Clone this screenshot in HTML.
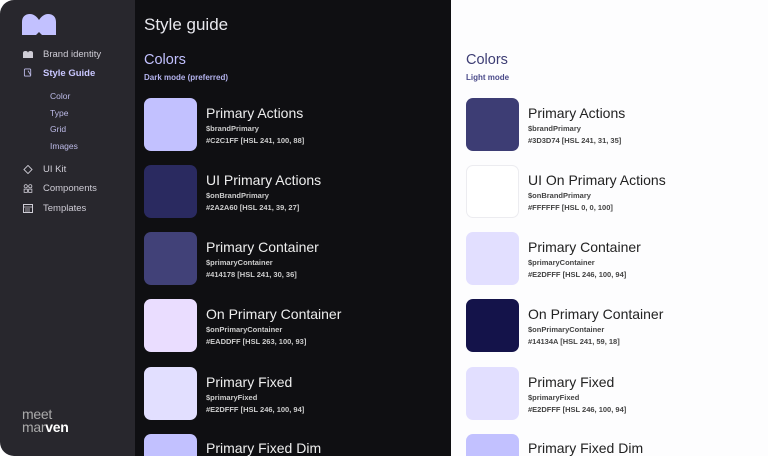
<!DOCTYPE html>
<html style="width:768px;height:456px;overflow:hidden"><head><style>
*{margin:0;padding:0;box-sizing:border-box}
body{width:768px;height:456px;background:#fff;position:relative;overflow:hidden;font-family:"Liberation Sans",sans-serif}
.side{position:absolute;left:0;top:0;width:136px;height:456px;background:#28272d;border-radius:14px 0 0 14px}
.dark{position:absolute;left:135px;top:0;width:316px;height:456px;background:#0f0f12}
.light{position:absolute;left:451px;top:0;width:317px;height:456px;background:#fdfdfe}
.nav{position:absolute;left:43px;font-size:9.5px;color:#cfcdd6}
.sub{position:absolute;left:50px;font-size:8.5px;color:#bdbbe8}
.ic{position:absolute;left:23px;width:10px;height:9px}
.h1{position:absolute;left:144px;top:15px;font-size:17px;color:#e8e8ee}
.h2{position:absolute;top:52px;font-size:14.5px}
.h3{position:absolute;top:73px;font-size:8px;font-weight:bold}
.sw{position:absolute;width:53px;height:53px;border-radius:7px}
.t{position:absolute;font-size:14px;line-height:16px}
.v{position:absolute;font-size:7.5px;font-weight:bold}
.last{height:22px;border-radius:7px 7px 0 0}
</style></head><body>
<div class="side">
<svg style="position:absolute;left:22px;top:14px" width="34" height="21" viewBox="0 0 34 21"><path d="M0 8C0 3 3 0 8 0C12 0 15 3 17 6C19 3 22 0 26 0C31 0 34 3 34 8V21H20L17 18L14 21H0Z" fill="#c2c1ff"/></svg>
<svg class="ic" style="top:50px" viewBox="0 0 10 9"><path d="M0 3Q0 1 2.5 1T5 3Q5 1 7.5 1T10 3V8H0Z" fill="#cfcdd6"/></svg>
<div class="nav" style="top:49px">Brand identity</div>
<svg class="ic" style="top:68px" viewBox="0 0 10 10"><rect x="1" y="1" width="7" height="8" rx="1" fill="none" stroke="#bdbbe8"/><path d="M5 3L8 8" stroke="#bdbbe8"/></svg>
<div class="nav" style="top:68px;color:#c9c7ff;font-weight:bold">Style Guide</div>
<div class="sub" style="top:91px">Color</div>
<div class="sub" style="top:108px">Type</div>
<div class="sub" style="top:124px">Grid</div>
<div class="sub" style="top:141px">Images</div>
<svg class="ic" style="top:165px" viewBox="0 0 10 10"><path d="M5 0.5L9.5 5L5 9.5L0.5 5Z" fill="none" stroke="#cfcdd6"/></svg>
<div class="nav" style="top:164px">UI Kit</div>
<svg class="ic" style="top:184px" viewBox="0 0 10 10"><g fill="none" stroke="#cfcdd6" stroke-width=".9"><circle cx="2.5" cy="2.5" r="1.8"/><circle cx="7.5" cy="2.5" r="1.8"/><rect x=".7" y="5.7" width="3.6" height="3.6"/><rect x="5.7" y="5.7" width="3.6" height="3.6"/></g></svg>
<div class="nav" style="top:183px">Components</div>
<svg class="ic" style="top:204px" viewBox="0 0 10 9"><rect x=".5" y=".5" width="9" height="8" fill="none" stroke="#cfcdd6"/><path d="M.5 3H9.5M2 5H7M2 7H7" stroke="#cfcdd6" stroke-width=".8"/></svg>
<div class="nav" style="top:203px">Templates</div>
<div style="position:absolute;left:22px;top:408px;font-size:14px;line-height:13px;color:#aaa;letter-spacing:-.3px">meet<br>mar<b style="color:#fff">ven</b></div>
</div>
<div class="dark"></div>
<div class="light"></div>
<div class="h1">Style guide</div>
<div class="h2" style="left:144px;color:#c2c1ff">Colors</div>
<div class="h3" style="left:144px;color:#b4b3ee">Dark mode (preferred)</div>
<div class="h2" style="left:466px;color:#3d3d74">Colors</div>
<div class="h3" style="left:466px;color:#4a4a8a">Light mode</div>
<div class="sw" style="left:144px;top:98px;background:#c2c1ff"></div>
<div class="t" style="left:206px;top:105px;color:#eee">Primary Actions</div><div class="v" style="left:206px;top:124px;color:#ccc">$brandPrimary</div><div class="v" style="left:206px;top:136px;color:#ccc">#C2C1FF [HSL 241, 100, 88]</div>
<div class="sw" style="left:144px;top:165px;background:#2a2a60"></div>
<div class="t" style="left:206px;top:172px;color:#eee">UI Primary Actions</div><div class="v" style="left:206px;top:191px;color:#ccc">$onBrandPrimary</div><div class="v" style="left:206px;top:203px;color:#ccc">#2A2A60 [HSL 241, 39, 27]</div>
<div class="sw" style="left:144px;top:232px;background:#414178"></div>
<div class="t" style="left:206px;top:239px;color:#eee">Primary Container</div><div class="v" style="left:206px;top:258px;color:#ccc">$primaryContainer</div><div class="v" style="left:206px;top:270px;color:#ccc">#414178 [HSL 241, 30, 36]</div>
<div class="sw" style="left:144px;top:299px;background:#eaddff"></div>
<div class="t" style="left:206px;top:306px;color:#eee">On Primary Container</div><div class="v" style="left:206px;top:325px;color:#ccc">$onPrimaryContainer</div><div class="v" style="left:206px;top:337px;color:#ccc">#EADDFF [HSL 263, 100, 93]</div>
<div class="sw" style="left:144px;top:367px;background:#e2dfff"></div>
<div class="t" style="left:206px;top:374px;color:#eee">Primary Fixed</div><div class="v" style="left:206px;top:393px;color:#ccc">$primaryFixed</div><div class="v" style="left:206px;top:405px;color:#ccc">#E2DFFF [HSL 246, 100, 94]</div>
<div class="sw last" style="left:144px;top:434px;background:#c2c1ff"></div>
<div class="t" style="left:206px;top:440px;color:#eee">Primary Fixed Dim</div>
<div class="sw" style="left:466px;top:98px;background:#3d3d74"></div>
<div class="t" style="left:528px;top:105px;color:#222">Primary Actions</div><div class="v" style="left:528px;top:124px;color:#444">$brandPrimary</div><div class="v" style="left:528px;top:136px;color:#444">#3D3D74 [HSL 241, 31, 35]</div>
<div class="sw" style="left:466px;top:165px;background:#fff;border:1px solid #ececf0"></div>
<div class="t" style="left:528px;top:172px;color:#222">UI On Primary Actions</div><div class="v" style="left:528px;top:191px;color:#444">$onBrandPrimary</div><div class="v" style="left:528px;top:203px;color:#444">#FFFFFF [HSL 0, 0, 100]</div>
<div class="sw" style="left:466px;top:232px;background:#e2dfff"></div>
<div class="t" style="left:528px;top:239px;color:#222">Primary Container</div><div class="v" style="left:528px;top:258px;color:#444">$primaryContainer</div><div class="v" style="left:528px;top:270px;color:#444">#E2DFFF [HSL 246, 100, 94]</div>
<div class="sw" style="left:466px;top:299px;background:#14134a"></div>
<div class="t" style="left:528px;top:306px;color:#222">On Primary Container</div><div class="v" style="left:528px;top:325px;color:#444">$onPrimaryContainer</div><div class="v" style="left:528px;top:337px;color:#444">#14134A [HSL 241, 59, 18]</div>
<div class="sw" style="left:466px;top:367px;background:#e2dfff"></div>
<div class="t" style="left:528px;top:374px;color:#222">Primary Fixed</div><div class="v" style="left:528px;top:393px;color:#444">$primaryFixed</div><div class="v" style="left:528px;top:405px;color:#444">#E2DFFF [HSL 246, 100, 94]</div>
<div class="sw last" style="left:466px;top:434px;background:#c2c1ff"></div>
<div class="t" style="left:528px;top:440px;color:#222">Primary Fixed Dim</div>
</body></html>
